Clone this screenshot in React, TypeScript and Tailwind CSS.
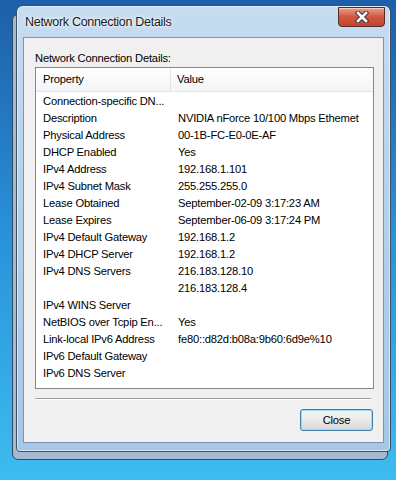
import { useState } from 'react';

// Rows of the details list view
const details: { property: string; value: string }[] = [
  { property: 'Connection-specific DN...', value: '' },
  { property: 'Description', value: 'NVIDIA nForce 10/100 Mbps Ethemet' },
  { property: 'Physical Address', value: '00-1B-FC-E0-0E-AF' },
  { property: 'DHCP Enabled', value: 'Yes' },
  { property: 'IPv4 Address', value: '192.168.1.101' },
  { property: 'IPv4 Subnet Mask', value: '255.255.255.0' },
  { property: 'Lease Obtained', value: 'September-02-09 3:17:23 AM' },
  { property: 'Lease Expires', value: 'September-06-09 3:17:24 PM' },
  { property: 'IPv4 Default Gateway', value: '192.168.1.2' },
  { property: 'IPv4 DHCP Server', value: '192.168.1.2' },
  { property: 'IPv4 DNS Servers', value: '216.183.128.10' },
  { property: '', value: '216.183.128.4' },
  { property: 'IPv4 WINS Server', value: '' },
  { property: 'NetBIOS over Tcpip En...', value: 'Yes' },
  { property: 'Link-local IPv6 Address', value: 'fe80::d82d:b08a:9b60:6d9e%10' },
  { property: 'IPv6 Default Gateway', value: '' },
  { property: 'IPv6 DNS Server', value: '' },
];

const font = "font-['Segoe_UI','Liberation_Sans',Arial,sans-serif]";

const CloseGlyph = () => (
  <svg width="14" height="12" viewBox="0 0 14 12">
    <path d="M3 2 L11 10 M11 2 L3 10" stroke="#3a3a3a" strokeWidth="4.6" strokeLinecap="square" />
    <path d="M3 2 L11 10 M11 2 L3 10" stroke="#ffffff" strokeWidth="2.6" strokeLinecap="square" />
  </svg>
);

const App = () => {
  const [selected, setSelected] = useState<number | null>(null);

  return (
    <div className={`flex w-[402px] h-[480px] ${font}`}>
      {/* Desktop */}
      <div className="relative w-[396px] h-[480px] bg-gradient-to-b from-[#1d5fa9] via-[#2a93da] to-[#3dbcf0] pl-[16px] pt-[5px]">
        {/* Back window edge */}
        <div className="absolute left-[12px] top-[14px] w-[376px] h-[446px] rounded-[6px] border border-[#34495e] bg-[#a3bad0]" />

        {/* Dialog */}
        <div className="relative w-[375px] h-[447px] rounded-t-[7px] rounded-b-[4px] border border-[#3d4f63] bg-gradient-to-b from-[#c6dcf1] via-[#b3cfea] to-[#a6c7e6] flex flex-col px-[6px] pb-[8px] shadow-[inset_0_0_0_1px_rgba(255,255,255,0.55)]">
          {/* Title bar */}
          <div className="relative h-[31px] shrink-0">
            <span className="absolute left-[2px] top-[8px] text-[12.5px] tracking-[-0.3px] leading-[16px] text-[#1b1b1b] [text-shadow:0_0_6px_#ffffff,0_0_3px_#ffffff]">
              Network Connection Details
            </span>
            <button className="absolute right-[-1px] top-[1px] w-[47px] h-[20px] rounded-b-[4px] border border-[#5a2a25] bg-gradient-to-b from-[#e9a08e] via-[#d0553f] to-[#c4452f] flex items-center justify-center shadow-[inset_0_1px_0_rgba(255,255,255,0.5)]">
              <CloseGlyph />
            </button>
          </div>

          {/* Client area */}
          <div className="flex-1 border border-[#7f93a9] bg-[#f0f0f0] flex flex-col pl-[11px] pr-[10px] pt-[12px] text-[11.2px] tracking-[-0.2px] text-black">
            <div className="leading-[16px] h-[16px] mb-[1px]">Network Connection Details:</div>

            {/* List view */}
            <div className="h-[322px] w-[339px] border border-[#828790] bg-white flex flex-col">
              <div className="h-[24px] flex shrink-0 bg-gradient-to-b from-white to-[#f3f4f6] border-b border-[#e5e5e5]">
                <div className="w-[135px] border-r border-[#e3e5e8] pl-[7px] flex items-center">Property</div>
                <div className="flex-1 pl-[6px] flex items-center">Value</div>
              </div>
              <div className="pt-[1px] flex flex-col">
                {details.map((row, i) => (
                  <div
                    key={i}
                    onClick={() => setSelected(i)}
                    className={`h-[17px] flex items-center leading-[17px] ${selected === i ? 'bg-[#cce8ff]' : ''}`}
                  >
                    <div className="w-[135px] pl-[7px] whitespace-nowrap overflow-hidden">{row.property}</div>
                    <div className="flex-1 pl-[7px] whitespace-nowrap">{row.value}</div>
                  </div>
                ))}
              </div>
            </div>

            {/* Separator */}
            <div className="mt-[9px] w-[336px] h-[2px] border-t border-[#a0a0a0] border-b border-b-white" />

            {/* Buttons */}
            <div className="flex justify-end mt-[9px]">
              <button className="w-[73px] h-[22px] rounded-[3px] border border-[#3c7fb1] bg-gradient-to-b from-[#f4f4f4] via-[#ebebeb] to-[#d6d6d6] shadow-[inset_0_0_0_1px_#9fdcf6] text-[11.2px] tracking-[-0.2px] text-black">
                Close
              </button>
            </div>
          </div>
        </div>
      </div>
      <div className="w-[6px] h-[480px] bg-white" />
    </div>
  );
};

export default App;
